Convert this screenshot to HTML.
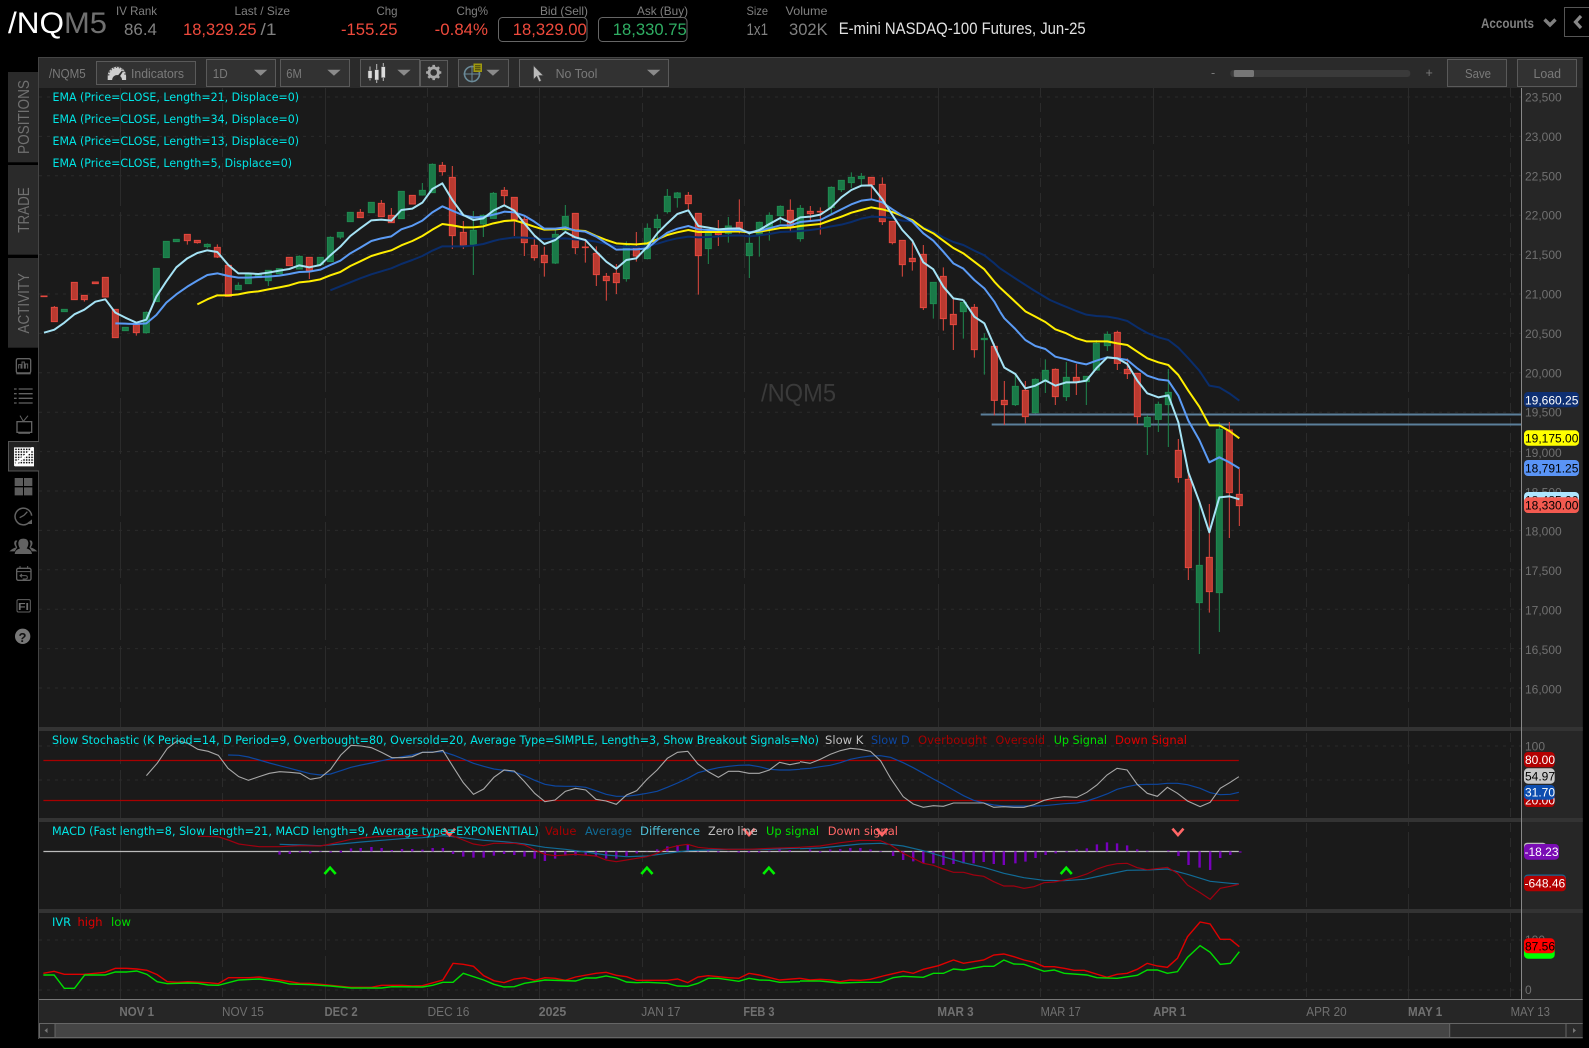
<!DOCTYPE html>
<html><head><meta charset="utf-8"><title>/NQM5 Chart</title>
<style>
html,body{margin:0;padding:0;background:#000;width:1589px;height:1048px;overflow:hidden}
svg{display:block}
text{font-family:"Liberation Sans",Arial,sans-serif;white-space:pre}
.o{font-family:"DejaVu Sans","Liberation Sans",sans-serif;font-size:11.6px}
.ax{font-size:12px;fill:#707070}
.pill{font-size:12px}
.ns{vector-effect:non-scaling-stroke;fill:none}
</style></head><body>
<svg width="1589" height="1048" viewBox="0 0 1589 1048" xmlns="http://www.w3.org/2000/svg">
<rect width="1589" height="1048" fill="#000"/>

<!-- top bar -->
<text x="8" y="33" font-size="30" fill="#fff" textLength="56" lengthAdjust="spacingAndGlyphs">/NQ</text>
<text x="64" y="33" font-size="30" fill="#707070" textLength="43" lengthAdjust="spacingAndGlyphs">M5</text>
<g font-size="12" fill="#808080">
<text x="116" y="15" textLength="41" lengthAdjust="spacingAndGlyphs">IV Rank</text>
<text x="234.5" y="15" textLength="55.5" lengthAdjust="spacingAndGlyphs">Last / Size</text>
<text x="376.5" y="15" textLength="21" lengthAdjust="spacingAndGlyphs">Chg</text>
<text x="456.5" y="15" textLength="31.5" lengthAdjust="spacingAndGlyphs">Chg%</text>
<text x="540" y="15" textLength="48" lengthAdjust="spacingAndGlyphs">Bid (Sell)</text>
<text x="637" y="15" textLength="51" lengthAdjust="spacingAndGlyphs">Ask (Buy)</text>
<text x="746.5" y="15" textLength="21.5" lengthAdjust="spacingAndGlyphs">Size</text>
<text x="785.5" y="15" textLength="42" lengthAdjust="spacingAndGlyphs">Volume</text>
</g>
<rect x="498.5" y="17.5" width="88.5" height="24" rx="4" fill="#000" stroke="#666"/>
<rect x="598.5" y="17.5" width="88.5" height="24" rx="4" fill="#000" stroke="#666"/>
<g font-size="16.5">
<text x="124" y="35" fill="#808080" textLength="33" lengthAdjust="spacingAndGlyphs">86.4</text>
<text x="183" y="35" fill="#ef4a3c" textLength="73.6" lengthAdjust="spacingAndGlyphs">18,329.25</text>
<text x="260.5" y="35" fill="#808080" textLength="16" lengthAdjust="spacingAndGlyphs">/1</text>
<text x="341" y="35" fill="#ef4a3c" textLength="56.5" lengthAdjust="spacingAndGlyphs">-155.25</text>
<text x="434.7" y="35" fill="#ef4a3c" textLength="53.3" lengthAdjust="spacingAndGlyphs">-0.84%</text>
<text x="512.8" y="35" fill="#ef4a3c" textLength="74" lengthAdjust="spacingAndGlyphs">18,329.00</text>
<text x="612.8" y="35" fill="#2fae63" textLength="74" lengthAdjust="spacingAndGlyphs">18,330.75</text>
<text x="746.5" y="35" fill="#808080" textLength="21.5" lengthAdjust="spacingAndGlyphs">1x1</text>
<text x="789" y="35" fill="#808080" textLength="38.7" lengthAdjust="spacingAndGlyphs">302K</text>
<text x="838.7" y="34" fill="#e2e2e2" textLength="247" lengthAdjust="spacingAndGlyphs">E-mini NASDAQ-100 Futures, Jun-25</text>
</g>
<text x="1481" y="28" font-size="14" font-weight="bold" fill="#808080" textLength="53" lengthAdjust="spacingAndGlyphs">Accounts</text>
<path d="M1544.5 19.5l5.5 5.5 5.5-5.5" fill="none" stroke="#808080" stroke-width="3.4"/>
<rect x="1564.5" y="7.5" width="30" height="29" fill="#000" stroke="#555"/>
<path d="M1581 16l-5.5 6 5.5 6" fill="none" stroke="#888" stroke-width="3.2"/>

<!-- left tabs -->
<rect x="8" y="72" width="30" height="90.3" fill="#2a2a2a"/>
<rect x="8" y="165" width="30" height="89.7" fill="#2a2a2a"/>
<rect x="8" y="258" width="30" height="89.7" fill="#2a2a2a"/>
<g font-size="16" fill="#707070">
<text transform="translate(29,154) rotate(-90)" textLength="74" lengthAdjust="spacingAndGlyphs">POSITIONS</text>
<text transform="translate(29,232.7) rotate(-90)" textLength="45.4" lengthAdjust="spacingAndGlyphs">TRADE</text>
<text transform="translate(29,333.5) rotate(-90)" textLength="60.5" lengthAdjust="spacingAndGlyphs">ACTIVITY</text>
</g>

<!-- panel -->
<rect x="38" y="57" width="1544.7" height="982" fill="#1a1a1a"/>
<rect x="38" y="57" width="1544.7" height="31" fill="#2a2a2a"/>
<path d="M38.5 1039V57.5H1582.7" fill="none" stroke="#444"/>

<!-- grid -->
<g fill="none" stroke="#2b2b2b" stroke-width="1">
<path stroke-dasharray="3 5" d="M39 97H1521M39 136.4H1521M39 175.8H1521M39 215.2H1521M39 254.6H1521M39 294H1521M39 333.4H1521M39 372.8H1521M39 412.2H1521M39 451.6H1521M39 491H1521M39 530.4H1521M39 569.8H1521M39 609.2H1521M39 648.6H1521M39 688H1521M39 746H1521M39 780H1521M39 940H1521M39 990H1521"/>
<path stroke-dasharray="56 6" d="M120.5 88V999M325.5 88V999M539.5 88V999M744.5 88V999M938.5 88V999M1153.5 88V999M1408.5 88V999"/>
<path stroke-dasharray="9 6" d="M222.5 88V999M427.5 88V999M642.5 88V999M1040.5 88V999M1306.5 88V999M1510.5 88V999"/>
</g>

<!-- support lines -->
<path d="M980.7 414.5H1521.5M991.7 424.5H1521.5" stroke="#5b7f9a" stroke-width="2" fill="none"/>

<!-- watermark -->
<text x="761" y="401.7" font-size="25" fill="#3a3a3a" textLength="75" lengthAdjust="spacingAndGlyphs">/NQM5</text>

<!-- candles zone A -->
<g transform="translate(0,180) scale(.33333)" stroke-width="3">
<path fill="none" stroke="#e0483e" d="M163 378V425M253 359V365M409 458V467M562 182V194M592 188V191M652 193V234M928 272V297M1081 87V113M1144 60V110M1174 84V128"/>
<path fill="none" stroke="#1f8a50" d="M439 394V461M622 190V205M715 307V329M805 302V318M898 226V267M991 169V245M1021 171V177"/>
<path fill="#b93a30" stroke="#e5483f" d="M132 348h9V350h-18V348zM163 382h9V425h-18V382zM223 307h9V359h-18V307zM253 346h9V359h-18V346zM286 306h9V311h-18V306zM316 292h9V351h-18V292zM346 388h9V473h-18V388zM409 434h9V458h-18V434zM562 163h9V182h-18V163zM592 181h9V188h-18V181zM652 202h9V231h-18V202zM685 256h9V349h-18V256zM868 232h9V257h-18V232zM928 232h9V272h-18V232zM1081 97h9V113h-18V97zM1144 70h9V110h-18V70zM1174 106h9V128h-18V106z"/>
<path fill="#1a7a48" stroke="#1f8a50" d="M193 388h9V395h-18V388zM376 442h9V452h-18V442zM439 397h9V458h-18V397zM469 265h9V365h-18V265zM499 184h9V233h-18V184zM529 178h9V185h-18V178zM622 193h9V200h-18V193zM715 316h9V329h-18V316zM745 284h9V311h-18V284zM775 282h9V293h-18V282zM805 271h9V302h-18V271zM838 266h9V281h-18V266zM898 229h9V267h-18V229zM961 232h9V254h-18V232zM991 172h9V245h-18V172zM1021 157h9V171h-18V157zM1051 97h9V125h-18V97zM1114 67h9V98h-18V67zM1204 34h9V116h-18V34z"/>
</g>
<!-- candles zone B -->
<g transform="translate(380,155) scale(.33333)" stroke-width="3">
<path fill="none" stroke="#e0483e" d="M187 21V62M217 33V282M250 198V282M373 96V150"/>
<path fill="none" stroke="#1f8a50" d="M127 84V122M157 25V113M280 168V360M310 178V246M340 111V190"/>
<path fill="#b93a30" stroke="#e5483f" d="M97 121h9V147h-18V121zM187 31h9V50h-18V31zM217 67h9V242h-18V67zM250 232h9V272h-18V232zM373 106h9V122h-18V106z"/>
<path fill="#1a7a48" stroke="#1f8a50" d="M127 106h9V120h-18V106zM157 28h9V113h-18V28zM280 226h9V268h-18V226zM310 181h9V207h-18V181zM340 115h9V190h-18V115z"/>
</g>
<!-- candles zone C -->
<g transform="translate(500,150) scale(.33333)" stroke-width="3">
<path fill="none" stroke="#e0483e" d="M43 142V258M73 200V318M103 258V332M133 290V380M226 190V312M256 270V338M289 289V408M319 369V452M349 342V432M409 246V335M565 126V178M595 190V434M655 210V288M718 148V250M871 148V244M931 168V210M961 172V254M1114 82V148M1147 82V225M1177 214V283M1207 271V380M1237 278V362M1270 285V480M1330 352V542M1360 445V600"/>
<path fill="none" stroke="#1f8a50" d="M166 240V342M196 165V250M379 274V395M442 220V328M472 193V265M502 117V191M532 126V173M625 238V342M685 201V278M748 248V384M778 215V320M808 187V272M841 166V220M901 165V275M994 109V192M1024 91V126M1054 67V114M1084 69V105M1300 397V506M1390 457V566"/>
<path fill="#b93a30" stroke="#e5483f" d="M43 142h9V208h-18V142zM73 208h9V278h-18V208zM103 286h9V323h-18V286zM133 316h9V338h-18V316zM226 190h9V293h-18V190zM256 291h9V293h-18V291zM289 310h9V374h-18V310zM319 379h9V392h-18V379zM349 370h9V398h-18V370zM409 292h9V318h-18V292zM565 136h9V161h-18V136zM595 190h9V317h-18V190zM655 240h9V254h-18V240zM718 217h9V240h-18V217zM871 181h9V230h-18V181zM931 184h9V191h-18V184zM961 184h9V186h-18V184zM1114 82h9V104h-18V82zM1147 103h9V215h-18V103zM1177 214h9V278h-18V214zM1207 271h9V344h-18V271zM1237 325h9V335h-18V325zM1270 313h9V473h-18V313zM1330 379h9V506h-18V379zM1360 493h9V524h-18V493z"/>
<path fill="#1a7a48" stroke="#1f8a50" d="M166 253h9V339h-18V253zM196 199h9V240h-18V199zM379 288h9V386h-18V288zM442 235h9V326h-18V235zM472 208h9V233h-18V208zM502 139h9V185h-18V139zM532 129h9V143h-18V129zM625 245h9V296h-18V245zM685 228h9V250h-18V228zM748 280h9V317h-18V280zM778 217h9V252h-18V217zM808 196h9V232h-18V196zM841 169h9V197h-18V169zM901 175h9V266h-18V175zM994 112h9V172h-18V112zM1024 91h9V119h-18V91zM1054 82h9V98h-18V82zM1084 79h9V86h-18V79zM1300 397h9V461h-18V397zM1390 457h9V485h-18V457z"/>
</g>
<!-- candles zone D -->
<g transform="translate(950,300) scale(.33333)" stroke-width="3">
<path fill="none" stroke="#e0483e" d="M73 12V173M133 130V346M163 243V375M226 243V370M316 205V315M379 192V285M502 92V210M532 175V237M562 220V372M685 417V548M715 520V840M778 612V938M838 366V714M868 505V678"/>
<path fill="none" stroke="#1f8a50" d="M103 100V224M196 222V318M256 235V340M286 178V279M349 186V303M409 229V315M439 120V210M472 94V153M592 345V465M625 305V396M655 207V441M748 610V1062M808 367V996"/>
<path fill="#b93a30" stroke="#e5483f" d="M73 22h9V149h-18V22zM133 139h9V301h-18V139zM163 301h9V314h-18V301zM226 271h9V350h-18V271zM316 208h9V290h-18V208zM379 232h9V246h-18V232zM502 97h9V190h-18V97zM532 208h9V221h-18V208zM562 220h9V350h-18V220zM685 451h9V532h-18V451zM715 538h9V803h-18V538zM778 772h9V875h-18V772zM838 390h9V578h-18V390zM868 583h9V617h-18V583z"/>
<path fill="#1a7a48" stroke="#1f8a50" d="M103 115h9V119h-18V115zM196 259h9V314h-18V259zM256 238h9V338h-18V238zM286 211h9V241h-18V211zM349 232h9V290h-18V232zM409 229h9V245h-18V229zM439 130h9V210h-18V130zM472 103h9V137h-18V103zM592 352h9V380h-18V352zM625 313h9V358h-18V313zM655 277h9V314h-18V277zM748 796h9V908h-18V796zM808 388h9V878h-18V388z"/>
</g>

<!-- EMA lines -->
<g fill="none" stroke-width="6" stroke-linejoin="round">
<g transform="translate(0,180) scale(.33333)">
<polyline stroke="#0a2d6b" points="991,331 1021,319 1051,307 1081,295 1114,283 1144,274 1174,265 1204,252 1237,240 1267,228 1297,212 1327,199 1357,199 1390,199 1420,197 1450,192 1480,183 1500,178"/>
<polyline stroke="#ffee00" points="592,373 622,358 652,346 685,346 715,343 745,337 775,334 805,328 838,322 868,316 898,307 928,304 961,298 991,286 1021,276 1051,258 1081,244 1114,228 1144,219 1174,211 1204,196 1237,183 1267,168 1297,149 1327,132 1357,136 1390,142 1420,142 1450,139 1480,130 1500,126"/>
<polyline stroke="#5b9bf5" points="346,430 376,431 409,432 439,430 469,405 499,368 529,343 562,320 592,302 622,285 652,280 685,288 715,293 745,293 775,291 805,290 838,287 868,282 898,276 928,275 961,269 991,255 1021,242 1051,220 1081,203 1114,183 1144,175 1174,169 1204,148 1237,137 1267,122 1297,97 1327,79 1357,92 1390,106 1420,112 1450,111 1480,104 1500,99"/>
<polyline stroke="#a5e3f5" points="132,458 163,449 193,428 223,403 253,389 286,365 316,358 346,398 376,413 409,428 439,419 469,350 499,304 529,262 562,235 592,219 622,211 652,216 685,255 715,280 745,280 775,282 805,278 838,272 868,267 898,256 928,262 961,255 991,226 1021,200 1051,168 1081,145 1114,121 1144,119 1174,122 1204,90 1237,86 1267,68 1297,27 1327,10 1357,60 1390,105 1420,120 1450,115 1480,92 1500,82"/>
</g>
<g transform="translate(500,150) scale(.33333)">
<polyline stroke="#0a2d6b" points="0,268 43,262 73,263 103,265 133,267 166,266 196,265 226,268 256,270 289,275 319,282 349,290 379,291 409,291 442,288 472,281 502,272 532,265 565,260 595,262 625,261 655,259 685,257 718,256 748,259 778,256 808,252 841,246 871,245 901,243 931,240 961,236 994,229 1024,224 1054,216 1084,206 1114,200 1147,201 1177,204 1207,212 1237,214 1270,232 1300,245 1330,262 1360,276 1390,285 1423,302 1453,316 1483,340 1500,355"/>
<polyline stroke="#ffee00" points="0,216 13,213 43,211 73,220 103,230 133,239 166,238 196,235 226,241 256,243 289,258 319,270 349,280 379,282 409,283 442,280 472,268 502,255 532,247 565,240 595,246 625,246 655,246 685,245 718,244 748,247 778,245 808,240 841,234 871,233 901,228 931,225 961,222 994,210 1024,200 1054,188 1084,180 1114,172 1147,178 1177,186 1207,198 1237,210 1270,235 1300,250 1330,272 1360,294 1390,310 1423,335 1453,358 1483,395 1500,413"/>
<polyline stroke="#5b9bf5" points="0,189 13,185 43,187 73,197 103,215 133,236 166,236 196,232 226,242 256,245 289,260 319,280 349,299 379,298 409,298 442,295 472,270 502,248 532,236 565,228 595,238 625,240 655,240 685,240 718,240 748,247 778,242 808,235 841,226 871,226 901,216 931,213 961,210 994,193 1024,178 1054,163 1084,152 1114,148 1147,157 1177,178 1207,197 1237,215 1270,250 1300,272 1330,305 1360,340 1390,356 1423,390 1453,415 1483,455 1500,485"/>
<polyline stroke="#a5e3f5" points="0,172 13,166 43,182 73,220 103,256 133,282 166,270 196,246 226,262 256,270 289,305 319,335 349,356 379,330 409,325 442,290 472,250 502,220 532,192 565,181 595,228 625,233 655,238 685,236 718,235 748,250 778,240 808,222 841,204 871,218 901,202 931,200 961,194 994,172 1024,142 1054,120 1084,107 1114,106 1147,148 1177,195 1207,240 1237,272 1270,337 1300,358 1330,410 1360,445 1390,450"/>
</g>
<g transform="translate(950,300) scale(.33333)">
<polyline stroke="#0a2d6b" points="150,-95 200,-62 250,-30 300,0 330,13 379,33 409,44 439,48 472,50 502,55 532,63 562,82 592,99 625,112 655,120 685,143 715,175 748,212 778,257 808,262 838,280 868,302"/>
<polyline stroke="#ffee00" points="150,-37 190,0 226,34 256,50 286,66 316,88 349,100 379,115 409,124 439,124 472,124 502,130 532,135 562,155 592,175 625,187 655,195 685,225 715,272 748,320 778,376 808,376 838,393 868,415"/>
<polyline stroke="#5b9bf5" points="150,35 163,55 196,87 226,120 256,138 286,147 316,170 349,178 379,187 409,193 439,182 472,172 502,175 532,180 562,205 592,227 625,238 655,242 685,287 715,362 748,420 778,487 808,472 838,487 868,505"/>
<polyline stroke="#a5e3f5" points="40,0 73,50 103,70 133,138 163,203 196,222 226,265 256,257 286,241 316,257 349,247 379,247 409,242 439,205 472,172 502,175 532,192 562,242 592,280 625,292 655,286 685,367 715,517 748,605 778,697 808,592 838,589 868,598"/>
</g>
</g>

<!-- Stochastic -->
<path d="M43.4 760.5H1238.8M43.4 800.5H1238.8" stroke="#a80000" stroke-width="1.2" fill="none"/>
<path d="M43.4 851.5H1238.8" stroke="#bbb" stroke-width="1.2" fill="none"/>

<g transform="translate(0,720) scale(.5102,.33333)">
<polyline class="ns" stroke="#0d47a1" stroke-width="1.2" points="447,105 468,106 487,111 508,120 528,129 548,137 568,145 588,153 608,161 628,165 648,162 668,152 688,142 708,135 728,129 748,122 768,116 788,110 808,105 828,97 848,96 868,95 888,105 908,117 928,130 948,139 968,147 988,151 1008,156 1028,167 1048,181 1068,193 1088,198 1108,199 1128,199 1148,202 1168,212 1188,223 1208,229 1228,229 1248,225 1268,220 1288,214 1308,202 1328,189 1348,175 1368,158 1388,150 1408,143 1428,139 1448,136 1468,135 1488,140 1508,148 1528,150 1548,150 1568,148"/>
<polyline class="ns" stroke="#a8a8a8" stroke-width="1.1" points="287,167 308,130 328,85 348,62 368,70 388,88 408,94 428,106 447,145 468,170 487,181 508,170 528,160 548,155 568,157 588,160 608,178 628,173 648,148 668,105 688,76 708,78 728,83 748,97 768,113 788,113 808,110 828,97 848,97 868,91 888,140 908,188 928,223 948,207 968,172 988,150 1008,153 1028,185 1048,220 1068,245 1088,240 1108,214 1128,205 1148,210 1168,238 1188,243 1208,253 1228,225 1248,212 1268,178 1288,150 1308,115 1328,97 1348,94 1368,132 1388,155 1408,172 1428,154 1448,154 1468,160 1488,160 1508,150 1528,127 1548,134 1568,128"/>
<path class="ns" stroke="#7700bb" stroke-width="2.4" d="M548 394V404M568 394V402M588 394V398M608 394V400M628 394V396M648 394V398M668 392V398M688 385V394M707 384V394M728 381V394M748 384V394M768 390V394M788 387V394M808 387V394M828 389V394M848 384V394M868 384V394M888 394V402M908 394V410M928 394V413M948 394V413M968 394V407M988 394V402M1008 394V405M1028 394V410M1048 394V416M1068 394V423M1088 394V416M1108 394V407M1128 394V406M1148 394V405M1168 394V410M1188 394V416M1208 394V416M1228 394V408M1248 394V400M1268 394V395M1288 388V394M1308 379V394M1328 375V394M1348 373V394M1368 393V394M1388 390V394M1408 394V397M1428 394V395M1448 394V398M1468 394V398M1488 394V398M1508 392V394M1528 388V394M1548 390V394"/>
<polyline class="ns" stroke="#116b96" stroke-width="1.2" points="548,373 588,375 628,377 668,372 708,366 748,361 788,356 828,353 868,347 908,353 948,361 988,365 1028,372 1068,382 1108,388 1148,396 1188,405 1228,410 1268,408 1308,400 1348,392 1388,390 1428,388 1508,388 1568,384"/>
<polyline class="ns" stroke="#a00010" stroke-width="1.2" points="388,349 428,350 447,360 468,372 487,376 508,380 548,380 588,377 628,378 648,372 668,365 688,358 708,354 748,349 788,347 808,347 848,345 868,340 888,348 908,360 928,372 948,377 968,370 1008,370 1028,375 1048,390 1068,403 1088,407 1128,403 1168,408 1188,420 1208,425 1228,420 1268,410 1288,400 1308,385 1328,377 1348,373 1368,382 1388,385 1428,388 1468,388 1508,385 1568,382"/>
<path class="ns" stroke="#00f000" stroke-width="2.6" d="M636 462L647 443L658 462M1257 462L1268 443L1279 462M1496 462L1507 443L1518 462"/>
<path class="ns" stroke="#ff6666" stroke-width="2.6" d="M870 326L881 345L892 326M1457 326L1468 345L1479 326"/>
<polyline class="ns" stroke="#e00000" stroke-width="1.4" points="85,760 106,754 126,763 166,763 206,757 226,745 248,745 268,747 288,751 308,764 328,785 348,787 368,785 408,788 428,791 448,773 488,773 508,771 548,780 588,790 608,790 628,793 688,802 728,802 748,796 788,796 808,798 828,797 868,780 888,730 908,733 928,739 948,767 968,782 988,788 1008,777 1028,773 1048,781 1068,773 1088,775 1108,781 1128,771 1168,760 1188,757 1208,766 1228,770 1248,781 1308,781 1328,777 1348,788 1368,771 1388,767 1428,773 1448,775 1468,760 1488,765 1528,780 1568,775"/>
<polyline class="ns" stroke="#00dd00" stroke-width="1.4" points="85,765 106,765 126,805 146,805 166,765 206,765 226,756 248,756 268,753 288,763 308,785 328,791 368,789 388,790 408,795 428,796 468,780 508,777 548,785 568,792 608,794 648,798 688,804 748,804 768,800 828,801 848,796 868,787 888,787 908,760 948,780 968,793 988,801 1008,800 1028,790 1068,780 1128,783 1148,774 1168,774 1188,768 1208,774 1228,786 1248,788 1268,787 1308,790 1328,798 1348,799 1368,790 1388,775 1408,775 1448,784 1468,775 1488,780 1508,781 1528,787 1568,785"/>
</g>
<g transform="translate(800,720) scale(.50327,.33333)">
<polyline class="ns" stroke="#0d47a1" stroke-width="1.2" points="0,147 20,145 40,140 60,136 80,128 100,118 120,112 140,108 160,107 180,112 205,128 225,143 245,160 265,177 285,193 305,210 325,227 345,241 365,249 385,255 405,258 425,258 445,258 465,258 485,257 505,254 525,251 550,249 570,243 590,233 610,222 630,208 650,200 670,194 690,193 710,193 730,190 750,190 770,194 795,205 815,218 835,224 855,223 872,217"/>
<polyline class="ns" stroke="#a8a8a8" stroke-width="1.1" points="0,125 20,130 40,118 60,103 80,92 100,85 120,88 140,94 160,122 180,175 205,230 225,252 245,262 265,257 285,259 305,249 325,249 345,249 365,249 385,262 405,260 425,262 445,262 465,254 485,241 505,234 525,230 550,232 570,217 590,195 610,165 630,145 650,150 670,193 690,220 710,229 730,202 750,220 770,243 795,260 815,247 835,205 855,187 872,170"/>
<path class="ns" stroke="#7700bb" stroke-width="2.4" d="M20 388V394M40 394V398M60 388V394M80 387V394M100 384V394M120 384V394M140 388V394M160 394V396M185 394V408M205 394V420M225 394V424M245 394V430M265 394V430M285 394V435M305 394V432M325 394V430M345 394V430M365 394V426M385 394V432M405 394V435M428 394V430M448 394V425M468 394V414M488 394V405M508 394V400M530 394V397M550 388V394M570 385V394M590 373V394M610 367V394M630 370V394M650 376V394M670 388V394M690 392V394M732 391V394M752 394V408M772 394V435M794 394V443M815 394V450M835 394V414M855 394V405M875 394V398"/>
<polyline class="ns" stroke="#116b96" stroke-width="1.2" points="0,386 40,384 80,378 120,372 160,370 205,378 245,392 285,410 325,428 365,442 405,460 445,473 485,481 525,482 565,478 605,465 650,451 690,450 730,447 770,463 815,484 855,490 872,492"/>
<polyline class="ns" stroke="#a00010" stroke-width="1.2" points="0,382 40,378 80,368 120,361 160,362 180,375 205,400 245,430 265,436 285,447 305,457 325,457 345,465 365,469 385,485 405,498 425,498 445,505 465,500 485,488 505,486 525,480 550,472 570,462 590,447 610,437 630,431 650,430 670,443 690,449 730,442 750,460 770,495 795,518 815,538 835,505 855,499 872,493"/>
<path class="ns" stroke="#00f000" stroke-width="2.6" d="M518 462L529 443L540 462"/>
<path class="ns" stroke="#ff6666" stroke-width="2.6" d="M152 326L163 345L174 326M740 326L751 345L762 326"/>
<polyline class="ns" stroke="#e00000" stroke-width="1.4" points="0,775 20,780 40,778 60,780 80,785 100,780 120,781 140,778 165,768 205,754 225,760 245,748 275,737 305,720 325,730 365,720 385,705 405,702 425,710 445,720 465,727 485,740 505,740 525,745 545,751 565,751 610,772 630,763 650,760 670,748 690,730 710,738 730,742 750,715 770,650 795,606 815,612 835,658 855,658 873,680"/>
<polyline class="ns" stroke="#00dd00" stroke-width="1.4" points="0,783 40,783 80,789 120,787 160,787 185,773 205,769 245,772 265,760 285,760 305,747 325,750 365,739 385,739 405,720 425,732 445,733 485,754 505,750 525,760 570,765 590,773 630,775 670,766 690,750 710,750 730,760 750,755 770,712 795,677 815,697 835,733 855,730 873,695"/>
</g>

<!-- panel separators -->
<rect x="39" y="727" width="1543.7" height="4" fill="#333"/>
<rect x="39" y="818" width="1543.7" height="4" fill="#333"/>
<rect x="39" y="909" width="1543.7" height="4" fill="#333"/>

<!-- indicator labels -->
<g class="o" fill="#00e5e5">
<text class="o" x="52.5" y="101" textLength="246.5" lengthAdjust="spacingAndGlyphs">EMA (Price=CLOSE, Length=21, Displace=0)</text>
<text class="o" x="52.5" y="123" textLength="246.5" lengthAdjust="spacingAndGlyphs">EMA (Price=CLOSE, Length=34, Displace=0)</text>
<text class="o" x="52.5" y="145" textLength="246.5" lengthAdjust="spacingAndGlyphs">EMA (Price=CLOSE, Length=13, Displace=0)</text>
<text class="o" x="52.5" y="167" textLength="239.5" lengthAdjust="spacingAndGlyphs">EMA (Price=CLOSE, Length=5, Displace=0)</text>
<text class="o" x="52" y="744" textLength="767" lengthAdjust="spacingAndGlyphs">Slow Stochastic (K Period=14, D Period=9, Overbought=80, Oversold=20, Average Type=SIMPLE, Length=3, Show Breakout Signals=No)</text>
<text class="o" x="52" y="835" textLength="486.8" lengthAdjust="spacingAndGlyphs">MACD (Fast length=8, Slow length=21, MACD length=9, Average type=EXPONENTIAL)</text>
<text class="o" x="52" y="926" textLength="19" lengthAdjust="spacingAndGlyphs">IVR</text>
</g>
<text class="o" x="825" y="744" fill="#c0c0c0" textLength="38.4" lengthAdjust="spacingAndGlyphs">Slow K</text>
<text class="o" x="871" y="744" fill="#0d47a1" textLength="38.7" lengthAdjust="spacingAndGlyphs">Slow D</text>
<text class="o" x="918" y="744" fill="#a80000" textLength="69" lengthAdjust="spacingAndGlyphs">Overbought</text>
<text class="o" x="995.5" y="744" fill="#a80000" textLength="49.5" lengthAdjust="spacingAndGlyphs">Oversold</text>
<text class="o" x="1053.7" y="744" fill="#00e000" textLength="53.3" lengthAdjust="spacingAndGlyphs">Up Signal</text>
<text class="o" x="1115" y="744" fill="#e00000" textLength="72" lengthAdjust="spacingAndGlyphs">Down Signal</text>
<text class="o" x="545" y="835" fill="#a80000" textLength="31.5" lengthAdjust="spacingAndGlyphs">Value</text>
<text class="o" x="585" y="835" fill="#116b96" textLength="47" lengthAdjust="spacingAndGlyphs">Average</text>
<text class="o" x="640" y="835" fill="#4fc0d8" textLength="60" lengthAdjust="spacingAndGlyphs">Difference</text>
<text class="o" x="708" y="835" fill="#c0c0c0" textLength="49.7" lengthAdjust="spacingAndGlyphs">Zero line</text>
<text class="o" x="766" y="835" fill="#00e000" textLength="53" lengthAdjust="spacingAndGlyphs">Up signal</text>
<text class="o" x="827.7" y="835" fill="#ff6666" textLength="70.3" lengthAdjust="spacingAndGlyphs">Down signal</text>
<text class="o" x="77.5" y="926" fill="#e00000" textLength="25" lengthAdjust="spacingAndGlyphs">high</text>
<text class="o" x="111" y="926" fill="#00dd00" textLength="20" lengthAdjust="spacingAndGlyphs">low</text>

<!-- right axis -->
<rect x="1522" y="88" width="60.7" height="911" fill="#262626"/>
<rect x="1522" y="727" width="60.7" height="4" fill="#333"/>
<rect x="1522" y="818" width="60.7" height="4" fill="#333"/>
<rect x="1522" y="909" width="60.7" height="4" fill="#333"/>
<path d="M1521.5 88V999" stroke="#888" fill="none"/>
<g class="ax">
<text class="ax" x="1525" y="101.5">23,500</text>
<text class="ax" x="1525" y="141">23,000</text>
<text class="ax" x="1525" y="180.3">22,500</text>
<text class="ax" x="1525" y="219.7">22,000</text>
<text class="ax" x="1525" y="259">21,500</text>
<text class="ax" x="1525" y="298.5">21,000</text>
<text class="ax" x="1525" y="337.9">20,500</text>
<text class="ax" x="1525" y="377.3">20,000</text>
<text class="ax" x="1525" y="416.7">19,500</text>
<text class="ax" x="1525" y="457">19,000</text>
<text class="ax" x="1525" y="496.3">18,500</text>
<text class="ax" x="1525" y="535.7">18,000</text>
<text class="ax" x="1525" y="575">17,500</text>
<text class="ax" x="1525" y="614.7">17,000</text>
<text class="ax" x="1525" y="654">16,500</text>
<text class="ax" x="1525" y="693.5">16,000</text>
<text class="ax" x="1525" y="750.5">100</text>
<text class="ax" x="1525" y="944">100</text>
<text class="ax" x="1525" y="994">0</text>
</g>
<rect x="1524" y="392" width="55" height="15.3" rx="4" fill="#0e2f72"/>
<text class="pill" x="1525" y="404.3" fill="#fff">19,660.25</text>
<rect x="1524" y="430.3" width="55" height="15.4" rx="4" fill="#ffff00"/>
<text class="pill" x="1525" y="442.6" fill="#000">19,175.00</text>
<rect x="1524" y="460" width="55" height="16" rx="4" fill="#5a94f5"/>
<text class="pill" x="1525" y="472.6" fill="#000">18,791.25</text>
<rect x="1524" y="492" width="55" height="16" rx="4" fill="#aee6ff"/>
<text class="pill" x="1525" y="504.5" fill="#000">18,485.00</text>
<rect x="1524" y="497.3" width="55" height="15.7" rx="4" fill="#f25a50"/>
<text class="pill" x="1525" y="509.7" fill="#000">18,330.00</text>

<rect x="1524" y="792" width="30.7" height="15" rx="4" fill="#b30000"/>
<text class="pill" x="1525" y="804.5" fill="#fff">20.00</text>
<rect x="1524" y="752" width="30.7" height="15.3" rx="4" fill="#b30000"/>
<text class="pill" x="1525" y="764" fill="#fff">80.00</text>
<rect x="1524" y="768.3" width="30.7" height="15.4" rx="4" fill="#c8c8c8"/>
<text class="pill" x="1525" y="780.3" fill="#000">54.97</text>
<rect x="1524" y="785" width="30.7" height="14.7" rx="4" fill="#0d4eb0"/>
<text class="pill" x="1525" y="796.7" fill="#fff">31.70</text>

<rect x="1524" y="842.7" width="22" height="8" rx="3" fill="#bbb"/>
<rect x="1524" y="844" width="35" height="15.7" rx="4" fill="#7a0cb5"/>
<text class="pill" x="1524.5" y="856" fill="#fff">-18.23</text>
<rect x="1524" y="874.5" width="42" height="10" rx="4" fill="#116b96"/>
<rect x="1524" y="875.7" width="42" height="15.6" rx="4" fill="#b30000"/>
<text class="pill" x="1524.5" y="887.7" fill="#fff">-648.46</text>

<rect x="1524" y="943" width="30.7" height="15.7" rx="4" fill="#00ff00"/>
<rect x="1524" y="938.3" width="30.7" height="15" rx="4" fill="#ff0000"/>
<text class="pill" x="1525" y="950.3" fill="#000">87.56</text>

<!-- bottom axis -->
<rect x="39" y="999.5" width="1543.7" height="23.5" fill="#262626"/>
<path d="M39 999.5H1582.7" stroke="#777" fill="none"/>
<g font-size="13" fill="#707070">
<text x="119.4" y="1016" font-weight="bold" textLength="34.6" lengthAdjust="spacingAndGlyphs">NOV 1</text>
<text x="222" y="1016" textLength="41.8" lengthAdjust="spacingAndGlyphs">NOV 15</text>
<text x="324.5" y="1016" font-weight="bold" textLength="33.2" lengthAdjust="spacingAndGlyphs">DEC 2</text>
<text x="427.5" y="1016" textLength="41.9" lengthAdjust="spacingAndGlyphs">DEC 16</text>
<text x="538.8" y="1016" font-weight="bold" textLength="27.5" lengthAdjust="spacingAndGlyphs">2025</text>
<text x="641.3" y="1016" textLength="39.3" lengthAdjust="spacingAndGlyphs">JAN 17</text>
<text x="743.4" y="1016" font-weight="bold" textLength="31.1" lengthAdjust="spacingAndGlyphs">FEB 3</text>
<text x="937.4" y="1016" font-weight="bold" textLength="36.2" lengthAdjust="spacingAndGlyphs">MAR 3</text>
<text x="1040.6" y="1016" textLength="40.2" lengthAdjust="spacingAndGlyphs">MAR 17</text>
<text x="1153.3" y="1016" font-weight="bold" textLength="32.7" lengthAdjust="spacingAndGlyphs">APR 1</text>
<text x="1306.3" y="1016" textLength="40.3" lengthAdjust="spacingAndGlyphs">APR 20</text>
<text x="1408" y="1016" font-weight="bold" textLength="34.2" lengthAdjust="spacingAndGlyphs">MAY 1</text>
<text x="1510.6" y="1016" textLength="39.3" lengthAdjust="spacingAndGlyphs">MAY 13</text>
</g>

<!-- scrollbar -->
<rect x="39" y="1023" width="1543.7" height="15.5" fill="#2b2b2b"/>
<rect x="55" y="1024" width="1394.7" height="13" fill="#454545"/>
<path d="M39 1023.5H1582.7M39 1037.5H1582.7M55 1023V1038M1449.7 1023V1038M1566 1023V1038M39.5 1023V1038" stroke="#666" fill="none"/>
<path d="M47.5 1028l-3 2.5 3 2.5zM1573 1028l3 2.5-3 2.5z" fill="#777"/>

<!-- toolbar -->
<g fill="none" stroke="#5a5a5a">
<rect x="96.5" y="61.5" width="99" height="23" fill="#323232"/>
<rect x="206.5" y="59.5" width="69" height="27" fill="#323232"/>
<rect x="280.5" y="59.5" width="69" height="27" fill="#323232"/>
<rect x="360.5" y="59.5" width="59" height="27" fill="#323232"/>
<rect x="420.5" y="60.5" width="27" height="26" fill="#323232"/>
<rect x="458.5" y="59.5" width="50" height="27" fill="#323232"/>
<rect x="519.5" y="59.5" width="149" height="27" fill="#323232"/>
<rect x="1447.5" y="59.5" width="59" height="27" fill="#323232"/>
<rect x="1517.5" y="59.5" width="59" height="27" fill="#323232"/>
</g>
<g font-size="12.5" fill="#7a7a7a">
<text x="49" y="78" textLength="36.7" lengthAdjust="spacingAndGlyphs">/NQM5</text>
<text x="131" y="78" textLength="53" lengthAdjust="spacingAndGlyphs">Indicators</text>
<text x="212.7" y="78" textLength="15" lengthAdjust="spacingAndGlyphs">1D</text>
<text x="286.3" y="78" textLength="15.5" lengthAdjust="spacingAndGlyphs">6M</text>
<text x="555.6" y="78" textLength="41.8" lengthAdjust="spacingAndGlyphs">No Tool</text>
<text x="1465" y="78" textLength="26" lengthAdjust="spacingAndGlyphs">Save</text>
<text x="1533.5" y="78" textLength="27.5" lengthAdjust="spacingAndGlyphs">Load</text>
<text x="1211" y="77">-</text>
<text x="1425.5" y="77">+</text>
</g>
<path d="M254 69.7h13.3l-6.65 6zM327.3 69.7h13.3l-6.65 6zM397.3 69.7h13.3l-6.65 6zM486.3 69.7h13.3l-6.65 6zM647 69.7h13.3l-6.65 6z" fill="#8a8a8a"/>
<!-- gauge icon -->
<path d="M107.7 80V76a9.2 9.2 0 0 1 18.4 0V80h-4a5 5 0 0 0-10 0z" fill="#cfcfcf"/>
<path d="M108.5 75.5a8.4 8.4 0 0 1 16.8 0" fill="none" stroke="#555" stroke-dasharray="1.4 1.6" stroke-width="1.8"/>
<path d="M115 79l7-8.5 1 1-5.5 8.5z" fill="#2d2d2d"/>
<!-- candle icon -->
<path d="M370 66.5v14M376.7 64v19M383.3 63v18" fill="none" stroke="#bbb"/>
<path d="M368 70.7h4v7.6h-4zM374.7 69.7h4V80h-4zM381.3 66.7h4v11h-4z" fill="#dcdcdc" stroke="#555" stroke-width=".5"/>
<!-- gear icon -->
<g transform="translate(433.7,72.5)">
<circle r="4.7" fill="none" stroke="#a8a8a8" stroke-width="2.8"/>
<path d="M-1.3-7.6h2.6v3h-2.6zM-1.3 4.6h2.6v3h-2.6zM-7.6-1.3h3v2.6h-3zM4.6-1.3h3v2.6h-3z" fill="#a8a8a8"/>
<path d="M-1.3-7.6h2.6v3h-2.6zM-1.3 4.6h2.6v3h-2.6zM-7.6-1.3h3v2.6h-3zM4.6-1.3h3v2.6h-3z" fill="#a8a8a8" transform="rotate(45)"/>
</g>
<!-- style icon -->
<g fill="none" stroke="#6a8a98">
<circle cx="472" cy="74" r="7.5" stroke-width="1.6"/>
<path d="M463.5 74h17M472 65.5v17"/>
</g>
<rect x="473.5" y="63.5" width="8.5" height="8.5" fill="#a09a10"/>
<path d="M475 65.8h5.5M475 67.8h5.5M475 69.8h5.5" stroke="#2d2d10" stroke-width=".8"/>
<!-- pointer icon -->
<path d="M533.5 65.5v14l3.2-3.2 2.4 5.5 2.2-1-2.4-5.3h4.4z" fill="#bbb" stroke="#444" stroke-width=".6"/>
<!-- slider -->
<rect x="1230.3" y="70" width="180" height="7" rx="3" fill="#3a3a3a"/>
<rect x="1233.8" y="70" width="20.2" height="7" rx="1.5" fill="#777"/>

<!-- sidebar icons -->
<rect x="8.5" y="441.5" width="30" height="29.5" fill="#222" stroke="#555"/>
<rect x="37" y="442" width="3" height="28.5" fill="#1f1f1f"/>
<g transform="translate(0,180) scale(.33333)" fill="none" stroke="#626262">
<rect x="49" y="536" width="43" height="43" rx="5" stroke-width="4"/>
<path d="M49 580h43" stroke-width="6"/>
<path d="M56 566v-12h7v12M66 566v-20h7v20M76 566v-14h7v14" stroke-width="3"/>
<path d="M56 627h42M56 641h42M56 655h42M56 669h42" stroke-width="4"/>
<path d="M42 627h8M42 641h8M42 655h8M42 669h8" stroke-width="4"/>
<rect x="51" y="725" width="44" height="32" stroke-width="4"/>
<path d="M60 707l10 17 14-17" stroke-width="3"/>
<path d="M55 760h35" stroke-width="3"/>
<rect x="42" y="802" width="60" height="56" fill="#111" stroke="none"/>
<path d="M44 802v56M52 802v56M60 802v56M68 802v56M76 802v56M84 802v56M92 802v56M100 802v56M42 804h60M42 812h60M42 820h60M42 828h60M42 836h60M42 844h60M42 852h60" stroke="#fff" stroke-width="3.4"/>
<path d="M44 856h58" stroke="#fff" stroke-width="6"/>
<path d="M48 850l44-36" stroke="#fff" stroke-width="6"/>
<circle cx="97" cy="806" r="5" fill="#fff" stroke="none"/>
<path d="M44 894h25v24h-25zM72 894h25v24h-25zM44 922h25v24h-25zM72 922h25v24h-25z" fill="#5c5c5c" stroke="none"/>
<path d="M88 1027a25 25 0 1 1 7-20" stroke-width="4.5"/>
<path d="M72 1006l10-11M72 1006l-13 7" stroke-width="4"/>
<path d="M78 1032h18v-14z" fill="#626262" stroke="none"/>
<path d="M28 1114q8-8 20-12q-7-8-5-16q3-7 9-4q-7 10 0 20l-8 12zM112 1114q-8-8-20-12q7-8 5-16q-3-7-9-4q7 10 0 20l8 12z" fill="#626262" stroke="none"/>
<path d="M44 1122q0-12 16-17q-6-8-5-18q2-11 15-11t15 11q1 10-5 18q16 5 16 17z" fill="#626262" stroke="none"/>
<rect x="50" y="1165" width="43" height="36" rx="5" stroke-width="4"/>
<path d="M50 1175h43M60 1158v8M83 1158v8" stroke-width="3"/>
<path d="M66 1182l-6 5 6 5M60 1187h16q6 0 6 5q0 5-6 5h-8" stroke-width="3"/>
<rect x="51" y="1259" width="40" height="37" rx="4" stroke-width="3"/>
<circle cx="68" cy="1369" r="23" fill="#777" stroke="none"/>
</g>
<text x="18" y="610" font-size="10" font-weight="bold" fill="#707070" textLength="11" lengthAdjust="spacingAndGlyphs">FI</text>
<text x="18.5" y="642" font-size="13" font-weight="bold" fill="#111">?</text>
</svg>
</body></html>
